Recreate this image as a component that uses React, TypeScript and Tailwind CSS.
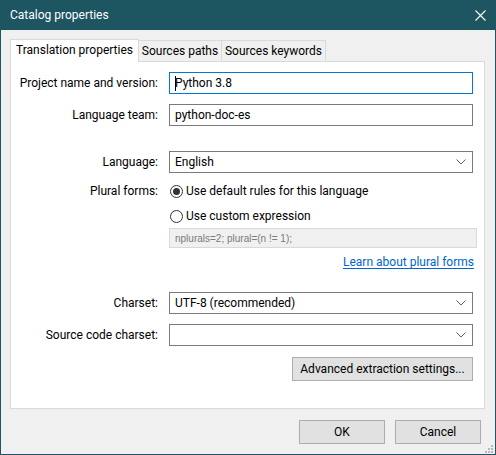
import React from "react";

const font = "font-['Segoe_UI',Roboto,'Noto_Sans',sans-serif]";

function Chevron() {
  return (
    <svg width="10" height="6" viewBox="0 0 10 6" className="shrink-0">
      <path d="M0.5 0.5 L5 5 L9.5 0.5" fill="none" stroke="#606060" strokeWidth="1" />
    </svg>
  );
}

function Field({ value, focused }: { value: string; focused?: boolean }) {
  return (
    <div
      className={`h-[22px] w-[304px] bg-white border flex items-center pl-[5px] text-[12px] text-black ${
        focused ? "border-[#0078d7]" : "border-[#7a7a7a]"
      }`}
    >
      {focused && <span className="w-px h-[15px] bg-black -mr-px" />}
      <span>{value}</span>
    </div>
  );
}

function Select({ value }: { value: string }) {
  return (
    <div className="h-[22px] w-[304px] bg-white border border-[#7a7a7a] flex items-center justify-between pl-[5px] pr-[6px] text-[12px] text-black">
      <span>{value}</span>
      <Chevron />
    </div>
  );
}

function Row({ label, children, className = "" }: { label: string; children: React.ReactNode; className?: string }) {
  return (
    <div className={`flex items-center ${className}`}>
      <div className="w-[148px] text-right text-[12px] text-black pr-px whitespace-nowrap">{label}</div>
      <div className="ml-[10px]">{children}</div>
    </div>
  );
}

function Radio({ checked, label }: { checked?: boolean; label: string }) {
  return (
    <div className="flex items-center h-[20px] text-[12px] text-black whitespace-nowrap">
      <span className="w-[13px] h-[13px] rounded-full border border-[#333333] bg-white flex items-center justify-center mr-[3px] ml-px">
        {checked && <span className="w-[7px] h-[7px] rounded-full bg-[#333333]" />}
      </span>
      {label}
    </div>
  );
}

export default function App() {
  return (
    <div className={`${font} w-[496px] h-[455px] flex flex-col bg-[#1d5560] px-px pb-px select-none`}>
      {/* title bar */}
      <div className="h-[31px] flex items-center justify-between pl-[9px] pr-[9px] text-white text-[12px]">
        <span>Catalog properties</span>
        <svg width="11" height="11" viewBox="0 0 11 11">
          <path d="M0.5 0.5 L10.5 10.5 M10.5 0.5 L0.5 10.5" stroke="#ffffff" strokeWidth="1.1" />
        </svg>
      </div>

      <div className="flex-1 bg-[#f0f0f0] flex flex-col pl-[9px] pr-[10px] pt-[9px]">
        {/* tabs */}
        <div className="flex items-end h-[22px] relative z-10 text-[12px] text-black whitespace-nowrap">
          <div className="h-[23px] -mb-px bg-white border border-b-0 border-[#d9d9d9] flex items-center justify-center pb-[2px] w-[129px]">
            Translation properties
          </div>
          <div className="h-[21px] w-[83px] border border-l-0 border-b-0 border-[#d9d9d9] bg-[#f0f0f0] flex items-center justify-center">
            Sources paths
          </div>
          <div className="h-[21px] w-[104px] border border-l-0 border-b-0 border-[#d9d9d9] bg-[#f0f0f0] flex items-center justify-center">
            Sources keywords
          </div>
        </div>

        {/* page */}
        <div className="h-[348px] w-[475px] bg-white border border-[#d9d9d9] flex flex-col pt-[10px]">
          <Row label="Project name and version:">
            <Field value="Python 3.8" focused />
          </Row>
          <Row label="Language team:" className="mt-[10px]">
            <Field value="python-doc-es" />
          </Row>
          <Row label="Language:" className="mt-[25px]">
            <Select value="English" />
          </Row>
          <Row label="Plural forms:" className="mt-[8px]">
            <Radio checked label="Use default rules for this language" />
          </Row>
          <div className="flex mt-[5px] pl-[158px]">
            <Radio label="Use custom expression" />
          </div>
          <div className="mt-[2px] ml-[158px] h-[20px] w-[308px] bg-[#f0f0f0] border border-[#d9d9d9] flex items-center pl-[5px] text-[10px] text-[#7a7a7a] font-['Liberation_Sans',sans-serif]">
            nplurals=2; plural=(n != 1);
          </div>
          <div className="mt-[5px] h-[16px] flex justify-end pr-[10px]">
            <span className="text-[12px] text-[#0066cc] underline underline-offset-2">Learn about plural forms</span>
          </div>
          <Row label="Charset:" className="mt-[23px]">
            <Select value="UTF-8 (recommended)" />
          </Row>
          <Row label="Source code charset:" className="mt-[10px]">
            <Select value="" />
          </Row>
          <div className="mt-[11px] flex justify-end pr-[11px]">
            <div className="h-[24px] w-[181px] bg-[#e1e1e1] border border-[#adadad] flex items-center justify-center text-[12px] text-black">
              Advanced extraction settings...
            </div>
          </div>
        </div>

        {/* dialog buttons */}
        <div className="flex justify-end gap-[10px] mt-[11px] pr-[4px]">
          <div className="h-[24px] w-[86px] bg-[#e1e1e1] border border-[#adadad] flex items-center justify-center text-[12px] text-black">
            OK
          </div>
          <div className="h-[24px] w-[86px] bg-[#e1e1e1] border border-[#adadad] flex items-center justify-center text-[12px] text-black">
            Cancel
          </div>
        </div>
        <div className="flex-1 flex items-end justify-end -mr-[9px]">
          <svg width="10" height="10" viewBox="0 0 10 10">
            <rect x="7" y="1" width="2" height="2" fill="#b8b8b8" />
            <rect x="4" y="4" width="2" height="2" fill="#b8b8b8" />
            <rect x="7" y="4" width="2" height="2" fill="#b8b8b8" />
            <rect x="1" y="7" width="2" height="2" fill="#b8b8b8" />
            <rect x="4" y="7" width="2" height="2" fill="#b8b8b8" />
            <rect x="7" y="7" width="2" height="2" fill="#b8b8b8" />
          </svg>
        </div>
      </div>
    </div>
  );
}
